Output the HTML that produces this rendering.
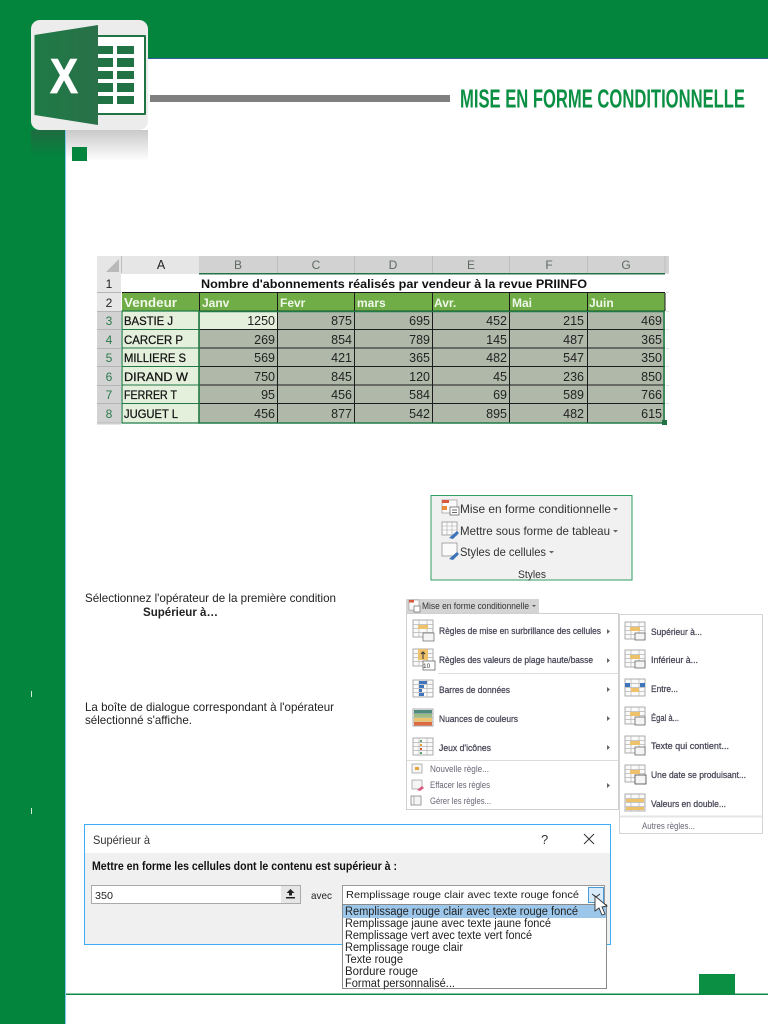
<!DOCTYPE html>
<html lang="fr"><head><meta charset="utf-8"><title>Mise en forme conditionnelle</title>
<style>
html,body{margin:0;padding:0;background:#fff;width:768px;height:1024px;overflow:hidden}
svg{display:block;font-family:"Liberation Sans",sans-serif;filter:blur(.35px)}
.hd{font-size:12px;fill:#5d6b60;text-anchor:middle}
.r{font-size:12px;fill:#2b7a4b;text-anchor:middle}
.a{font-size:12px;fill:#111;font-weight:bold;stroke:none}
.n{font-size:12.5px;fill:#222;text-anchor:end}
.h{font-size:12px;fill:#f0f7ea;font-weight:bold}
.rb{font-size:12px;fill:#333}
.m{font-size:9.5px;fill:#445;stroke:#445;stroke-width:.25px}
.s{font-size:9px;fill:#667}
.d{font-size:10.5px;fill:#222}
.b{font-size:12px;fill:#222}
</style></head><body>
<svg width="768" height="1024" viewBox="0 0 768 1024" xmlns="http://www.w3.org/2000/svg">
<defs>
<linearGradient id="rf" x1="0" y1="0" x2="0" y2="1"><stop offset="0" stop-color="#c9c9c9"/><stop offset="1" stop-color="#fff"/></linearGradient>
<linearGradient id="rg" x1="0" y1="0" x2="0" y2="1"><stop offset="0" stop-color="#1f6b3f"/><stop offset="1" stop-color="#03853e"/></linearGradient>
<linearGradient id="dr" x1="0" y1="0" x2="1" y2="0"><stop offset="0" stop-color="#1e7a45"/><stop offset="1" stop-color="#2a7049"/></linearGradient>
<g id="t"><rect x="0" y="0" width="20" height="17" fill="#fafafa" stroke="#999" stroke-width=".8"/><path d="M0 4.500H20M0 8.500H20M0 12.500H20M6 0V17M14 0V17" stroke="#b5b5b5" stroke-width=".7" fill="none"/></g>
<g id="hl"><use href="#t"/><rect x="5" y="5" width="10" height="4" fill="#eec26b"/></g>
</defs>

<!-- page frame -->
<rect x="0" y="0" width="768" height="58" fill="#03853e"/>
<rect x="148" y="58" width="620" height="1" fill="#2d5f9e"/>
<rect x="0" y="0" width="65" height="1024" fill="#03853e"/>
<rect x="65" y="130" width="1" height="894" fill="#7cc4f2"/>
<rect x="31" y="691" width="1" height="6" fill="#d6ecd9"/>
<rect x="31" y="808" width="1" height="6" fill="#d6ecd9"/>

<!-- logo -->
<rect x="66" y="130" width="82" height="31" fill="url(#rf)"/>
<rect x="31" y="130" width="34" height="28" fill="url(#rg)"/>
<rect x="72" y="147" width="15" height="14" fill="#03853e"/>
<rect x="31" y="20" width="117" height="110" rx="9" fill="#ececec"/>
<rect x="96" y="35" width="50" height="80" rx="1" fill="#217346"/>
<rect x="98" y="37" width="46" height="76" fill="#fff"/>
<path d="M98 46h15v8H98zM117 46h17v8h-17zM98 58h15v9H98zM117 58h17v9h-17zM98 71h15v8H98zM117 71h17v8h-17zM98 83h15v9H98zM117 83h17v9h-17zM98 96h15v8H98zM117 96h17v8h-17z" fill="#217346"/>
<path d="M34.500 35L98 25V125L34.500 115Z" fill="url(#dr)"/>
<text x="50" y="93" font-size="49" font-weight="bold" fill="#fff" stroke="#fff" stroke-width=".8" textLength="28" lengthAdjust="spacingAndGlyphs">X</text>

<rect x="150" y="95" width="300" height="7" fill="#808080"/>
<text x="460" y="107.500" font-size="26" font-weight="bold" fill="#0a8f43" textLength="285" lengthAdjust="spacingAndGlyphs">MISE EN FORME CONDITIONNELLE</text>

<!-- spreadsheet -->
<rect x="97" y="256" width="572" height="18" fill="#e6e6e6"/>
<rect x="199" y="256" width="470" height="17" fill="#d2d2d2"/>
<path d="M119 259V272H106Z" fill="#b9b9b9"/>
<rect x="97" y="274" width="24" height="151" fill="#e6e6e6"/>
<rect x="97" y="311" width="24" height="112" fill="#d2d2d2"/>
<path d="M97 292.500H121M97 311.500H121M97 329.500H121M97 348.500H121M97 366.500H121M97 385.500H121M97 403.500H121M97 423H121" stroke="#b5b5b5" stroke-width="1"/>
<path d="M121.500 256V273M277.500 256V273M354.500 256V273M432.500 256V273M509.500 256V273M587.500 256V273M665 256V273" stroke="#bdbdbd"/>
<path d="M666 292.500H669M666 311.500H669M666 329.500H669M666 348.500H669M666 366.500H669M666 385.500H669M666 403.500H669" stroke="#e0e0e0"/>
<rect x="199" y="273" width="466" height="1.500" fill="#217346"/>
<g class="hd"><text x="161" y="269" style="font-size:12.500px;fill:#222">A</text><text x="238" y="269">B</text><text x="316" y="269">C</text><text x="393" y="269">D</text><text x="471" y="269">E</text><text x="549" y="269">F</text><text x="626" y="269">G</text></g>
<g class="hd" style="fill:#222"><text x="109" y="288">1</text><text x="109" y="307">2</text></g>
<g class="r"><text x="109" y="325">3</text><text x="109" y="344">4</text><text x="109" y="362">5</text><text x="109" y="381">6</text><text x="109" y="399">7</text><text x="109" y="418">8</text></g>

<rect x="122" y="293" width="543" height="18" fill="#70ad47"/>
<rect x="122" y="311" width="77" height="112" fill="#e4efdc"/>
<rect x="199" y="311" width="466" height="112" fill="#b0b9a9"/>
<rect x="200" y="312" width="77" height="17" fill="#e4efdc"/>
<path d="M122 292.500H665M122 311H665M199 329.500H665M199 348H665M199 366.500H665M199 385H665M199 403.500H665" stroke="#1c1c1c" stroke-width="1"/>
<path d="M122 329.500H199M122 348H199M122 366.500H199M122 385H199M122 403.500H199" stroke="#1f7a47" stroke-width="1"/>
<path d="M199.500 293V311M277.500 293V423M354.500 293V423M432.500 293V423M509.500 293V423M587.500 293V423M665 293V311" stroke="#1c1c1c" stroke-width="1"/>
<path d="M122 311H199V423H122Z" fill="none" stroke="#1f7a47" stroke-width="1.200"/>
<path d="M199 311.500H664V423H199Z" fill="none" stroke="#1f7a47" stroke-width="1.500"/>
<rect x="662" y="420" width="5" height="5" fill="#217346"/>

<text x="201" y="288" class="a" textLength="386" lengthAdjust="spacingAndGlyphs">Nombre d'abonnements réalisés par vendeur à la revue PRIINFO</text>
<g class="h"><text x="124" y="307" textLength="53" lengthAdjust="spacingAndGlyphs" style="font-size:13px">Vendeur</text><text x="202" y="307">Janv</text><text x="280" y="307">Fevr</text><text x="357" y="307">mars</text><text x="434" y="307">Avr.</text><text x="512" y="307">Mai</text><text x="589" y="307">Juin</text></g>
<g class="n" style="text-anchor:start;font-size:12px;fill:#111;stroke:#111;stroke-width:.25px"><text x="124" y="325" textLength="49" lengthAdjust="spacingAndGlyphs">BASTIE J</text><text x="124" y="344" textLength="59" lengthAdjust="spacingAndGlyphs">CARCER P</text><text x="124" y="362" textLength="62" lengthAdjust="spacingAndGlyphs">MILLIERE S</text><text x="124" y="381" textLength="64" lengthAdjust="spacingAndGlyphs">DIRAND W</text><text x="124" y="399" textLength="53" lengthAdjust="spacingAndGlyphs">FERRER T</text><text x="124" y="418" textLength="54" lengthAdjust="spacingAndGlyphs">JUGUET L</text></g>
<g class="n">
<text x="275" y="325">1250</text><text x="352" y="325">875</text><text x="430" y="325">695</text><text x="507" y="325">452</text><text x="584" y="325">215</text><text x="662" y="325">469</text>
<text x="275" y="344">269</text><text x="352" y="344">854</text><text x="430" y="344">789</text><text x="507" y="344">145</text><text x="584" y="344">487</text><text x="662" y="344">365</text>
<text x="275" y="362">569</text><text x="352" y="362">421</text><text x="430" y="362">365</text><text x="507" y="362">482</text><text x="584" y="362">547</text><text x="662" y="362">350</text>
<text x="275" y="381">750</text><text x="352" y="381">845</text><text x="430" y="381">120</text><text x="507" y="381">45</text><text x="584" y="381">236</text><text x="662" y="381">850</text>
<text x="275" y="399">95</text><text x="352" y="399">456</text><text x="430" y="399">584</text><text x="507" y="399">69</text><text x="584" y="399">589</text><text x="662" y="399">766</text>
<text x="275" y="418">456</text><text x="352" y="418">877</text><text x="430" y="418">542</text><text x="507" y="418">895</text><text x="584" y="418">482</text><text x="662" y="418">615</text>
</g>

<!-- ribbon styles -->
<rect x="431" y="495.500" width="201" height="84.500" fill="#f1f1f1" stroke="#2e9e62" stroke-width="1"/>
<g transform="translate(442,500)"><rect width="15" height="13" fill="#fafafa" stroke="#999" stroke-width=".7"/><rect x="0" y="0" width="7" height="3" fill="#d9583b"/><rect x="0" y="6" width="5" height="4" fill="#e8893b"/><rect x="8" y="7" width="9" height="8" fill="#fff" stroke="#555" stroke-width=".7"/><path d="M10 10h5M10 12.500h5" stroke="#333" stroke-width=".7"/></g>
<g transform="translate(442,522)"><rect width="15" height="13" fill="#fafafa" stroke="#888" stroke-width=".7"/><path d="M0 4H15M0 8H15M5 0V13M10 0V13" stroke="#aaa" stroke-width=".6"/><path d="M7 16L15 9L17 11L11 17Z" fill="#3a73b8"/></g>
<g transform="translate(442,543)"><rect width="15" height="13" fill="#fafafa" stroke="#888" stroke-width=".7"/><path d="M7 16L15 9L17 11L11 17Z" fill="#3a73b8"/></g>
<g class="rb">
<text x="460" y="513" textLength="151" lengthAdjust="spacingAndGlyphs">Mise en forme conditionnelle</text>
<text x="460" y="535" textLength="150" lengthAdjust="spacingAndGlyphs">Mettre sous forme de tableau</text>
<text x="460" y="556" textLength="86" lengthAdjust="spacingAndGlyphs">Styles de cellules</text>
<text x="518" y="578" textLength="28" lengthAdjust="spacingAndGlyphs" style="font-size:11px">Styles</text>
</g>
<path d="M613 508h5l-2.500 2.500ZM613 530h5l-2.500 2.500ZM549 551h5l-2.500 2.500Z" fill="#666"/>

<!-- body text -->
<g class="b">
<text x="85" y="602" textLength="251" lengthAdjust="spacingAndGlyphs">Sélectionnez l'opérateur de la première condition</text>
<text x="143" y="616" font-weight="bold" textLength="75" lengthAdjust="spacingAndGlyphs">Supérieur à…</text>
<text x="85" y="711" textLength="249" lengthAdjust="spacingAndGlyphs">La boîte de dialogue correspondant à l'opérateur</text>
<text x="85" y="724" textLength="107" lengthAdjust="spacingAndGlyphs">sélectionné s'affiche.</text>
</g>

<!-- menu -->
<rect x="406" y="599" width="133" height="14" fill="#d4d4d4"/>
<g transform="translate(409,600)"><rect width="10" height="10" fill="#fafafa" stroke="#888" stroke-width=".5"/><rect width="5" height="2.500" fill="#d9583b"/><rect x="5" y="6" width="6" height="6" fill="#fff" stroke="#555" stroke-width=".6"/></g>
<text x="422" y="609" font-size="9" fill="#333" textLength="107" lengthAdjust="spacingAndGlyphs">Mise en forme conditionnelle</text>
<path d="M532 605h4l-2 2Z" fill="#555"/>
<rect x="406.500" y="613.500" width="212" height="196" fill="#fff" stroke="#cfcfcf"/>
<path d="M438 673.500H618M407 760.500H618" stroke="#dcdcdc"/>
<use href="#hl" x="413" y="620"/><rect x="423" y="633" width="11" height="8" fill="#f5f5f5" stroke="#666" stroke-width=".7"/>
<g transform="translate(413,649)"><use href="#t"/><rect x="5" y="0" width="10" height="11" fill="#eec26b"/><path d="M10 10V3M8 5l2-2 2 2" stroke="#333" fill="none"/><rect x="10" y="12" width="12" height="9" fill="#fff" stroke="#555" stroke-width=".7"/></g>
<text x="423" y="668" font-size="6.500" fill="#333">10</text>
<g transform="translate(413,680)"><use href="#t"/><path d="M6 1h8v3H6zM6 5h5v3H6zM6 9h3v3H6zM6 13h5v3H6z" fill="#3f75bb"/></g>
<g transform="translate(413,709)"><use href="#t"/><rect x="1" y="1" width="18" height="3.500" fill="#4f8a7a"/><rect x="1" y="5" width="18" height="3.500" fill="#9cbc82"/><rect x="1" y="9" width="18" height="3.500" fill="#eec26b"/><rect x="1" y="13" width="18" height="3.500" fill="#dd6b3f"/></g>
<g transform="translate(413,738)"><use href="#t"/><path d="M7 2h2v2H7z" fill="#5aa469"/><path d="M7 6h2v2H7z" fill="#e3a63b"/><path d="M7 10h2v2H7z" fill="#d9583b"/><path d="M7 14h2v2H7z" fill="#5aa469"/></g>
<g transform="translate(412,764)"><rect width="10" height="9" fill="#f5f5f5" stroke="#999" stroke-width=".7"/><rect x="3" y="3" width="4" height="3" fill="#e3a63b"/></g>
<g transform="translate(412,780)"><rect width="10" height="9" fill="#f5f5f5" stroke="#999" stroke-width=".7"/><path d="M5 10l5-4 2 2-4 3Z" fill="#d85a80"/></g>
<g transform="translate(411,796)"><rect width="10" height="9" fill="#f5f5f5" stroke="#777" stroke-width=".7"/><path d="M3 0V9" stroke="#999" stroke-width=".7"/></g>
<g class="m">
<text x="439" y="634" textLength="162" lengthAdjust="spacingAndGlyphs">Règles de mise en surbrillance des cellules</text>
<text x="439" y="663" textLength="154" lengthAdjust="spacingAndGlyphs">Règles des valeurs de plage haute/basse</text>
<text x="439" y="693" textLength="71" lengthAdjust="spacingAndGlyphs">Barres de données</text>
<text x="439" y="722" textLength="79" lengthAdjust="spacingAndGlyphs">Nuances de couleurs</text>
<text x="439" y="751" textLength="52" lengthAdjust="spacingAndGlyphs">Jeux d'icônes</text>
</g>
<g class="s">
<text x="430" y="772" textLength="59" lengthAdjust="spacingAndGlyphs">Nouvelle règle...</text>
<text x="430" y="788" textLength="60" lengthAdjust="spacingAndGlyphs">Effacer les règles</text>
<text x="430" y="804" textLength="61" lengthAdjust="spacingAndGlyphs">Gérer les règles...</text>
</g>
<path d="M607 629l3 2.500-3 2.500ZM607 658l3 2.500-3 2.500ZM607 687l3 2.500-3 2.500ZM607 716l3 2.500-3 2.500ZM607 745l3 2.500-3 2.500ZM607 783l3 2.500-3 2.500Z" fill="#666"/>

<!-- submenu -->
<rect x="619.500" y="614.500" width="143" height="219" fill="#fff" stroke="#d4d4d4"/>
<path d="M620 816.500H762" stroke="#e6e6e6" stroke-width="2"/>
<use href="#hl" x="625" y="622"/><rect x="635" y="633" width="10" height="7" fill="#f5f5f5" stroke="#555" stroke-width=".7"/>
<use href="#hl" x="625" y="650"/><rect x="635" y="661" width="10" height="7" fill="#f5f5f5" stroke="#555" stroke-width=".7"/>
<g transform="translate(625,679)"><use href="#t"/><rect x="0" y="4" width="5" height="4" fill="#3f75bb"/><rect x="15" y="4" width="5" height="4" fill="#3f75bb"/><rect x="6" y="9" width="8" height="4" fill="#eec26b"/></g>
<use href="#hl" x="625" y="707"/><rect x="635" y="717" width="10" height="8" fill="#f5f5f5" stroke="#555" stroke-width=".7"/>
<use href="#hl" x="625" y="736"/><rect x="635" y="747" width="10" height="8" fill="#f5f5f5" stroke="#555" stroke-width=".7"/>
<use href="#hl" x="625" y="765"/><rect x="635" y="775" width="11" height="9" fill="#f5f5f5" stroke="#444" stroke-width=".8"/>
<g transform="translate(625,794)"><use href="#t"/><rect x="1" y="5" width="18" height="3" fill="#eec26b"/><rect x="1" y="13" width="18" height="3" fill="#eec26b"/></g>
<g class="m">
<text x="651" y="635" textLength="51" lengthAdjust="spacingAndGlyphs">Supérieur à...</text>
<text x="651" y="663" textLength="47" lengthAdjust="spacingAndGlyphs">Inférieur à...</text>
<text x="651" y="692" textLength="27" lengthAdjust="spacingAndGlyphs">Entre...</text>
<text x="651" y="721" textLength="28" lengthAdjust="spacingAndGlyphs">Égal à...</text>
<text x="651" y="749" textLength="78" lengthAdjust="spacingAndGlyphs">Texte qui contient...</text>
<text x="651" y="778" textLength="95" lengthAdjust="spacingAndGlyphs">Une date se produisant...</text>
<text x="651" y="807" textLength="75" lengthAdjust="spacingAndGlyphs">Valeurs en double...</text>
</g>
<text x="642" y="829" class="s" textLength="53" lengthAdjust="spacingAndGlyphs">Autres règles...</text>

<!-- dialog -->
<rect x="84.500" y="824.500" width="526" height="120" fill="#f0f0f0" stroke="#3daef5"/>
<rect x="85" y="825" width="525" height="28" fill="#fff"/>
<text x="93" y="844" font-size="12" fill="#333" textLength="57" lengthAdjust="spacingAndGlyphs">Supérieur à</text>
<text x="541" y="844" font-size="13" fill="#333">?</text>
<path d="M584 834L594 844M594 834L584 844" stroke="#333" stroke-width="1"/>
<text x="92" y="870" font-size="11.500" font-weight="bold" fill="#111" textLength="305" lengthAdjust="spacingAndGlyphs">Mettre en forme les cellules dont le contenu est supérieur à :</text>
<rect x="91.500" y="885.500" width="209" height="18" fill="#fff" stroke="#aaa"/>
<rect x="281" y="886" width="19" height="17" fill="#e6e6e6"/>
<path d="M290.500 889l4 4h-2.500v2.500h-3V893h-2.500ZM286 897h9v1.500h-9Z" fill="#222"/>
<text x="95" y="899" class="d" textLength="18" lengthAdjust="spacingAndGlyphs">350</text>
<text x="311" y="899" class="d" textLength="21" lengthAdjust="spacingAndGlyphs">avec</text>
<rect x="342.500" y="885.500" width="262" height="19" fill="#fff" stroke="#999"/>
<text x="346" y="898" class="d" textLength="233" lengthAdjust="spacingAndGlyphs">Remplissage rouge clair avec texte rouge foncé</text>
<rect x="588.500" y="887.500" width="15" height="15" fill="#d8ebfa" stroke="#4a9ad8"/>
<path d="M592 894l4 3 4-3" stroke="#333" fill="none"/>

<rect x="342.500" y="904.500" width="264" height="84" fill="#fff" stroke="#8a8a8a"/>
<rect x="343" y="905" width="263" height="13" fill="#9cc7ea"/>
<g class="d" style="font-size:11.500px">
<text x="345" y="915" textLength="233" lengthAdjust="spacingAndGlyphs">Remplissage rouge clair avec texte rouge foncé</text>
<text x="345" y="927" textLength="206" lengthAdjust="spacingAndGlyphs">Remplissage jaune avec texte jaune foncé</text>
<text x="345" y="939" textLength="187" lengthAdjust="spacingAndGlyphs">Remplissage vert avec texte vert foncé</text>
<text x="345" y="951" textLength="118" lengthAdjust="spacingAndGlyphs">Remplissage rouge clair</text>
<text x="345" y="963" textLength="58" lengthAdjust="spacingAndGlyphs">Texte rouge</text>
<text x="345" y="975" textLength="73" lengthAdjust="spacingAndGlyphs">Bordure rouge</text>
<text x="345" y="987" textLength="110" lengthAdjust="spacingAndGlyphs">Format personnalisé...</text>
</g>
<path d="M595 896L595 911L599 908L602 915L605 914L602 907L607 906Z" fill="#fff" stroke="#333" stroke-width=".9"/>

<!-- footer -->
<rect x="66" y="993.500" width="702" height="1.500" fill="#0f8a45"/>
<rect x="699" y="974" width="36" height="20" fill="#0a8f43"/>
</svg>
</body></html>
